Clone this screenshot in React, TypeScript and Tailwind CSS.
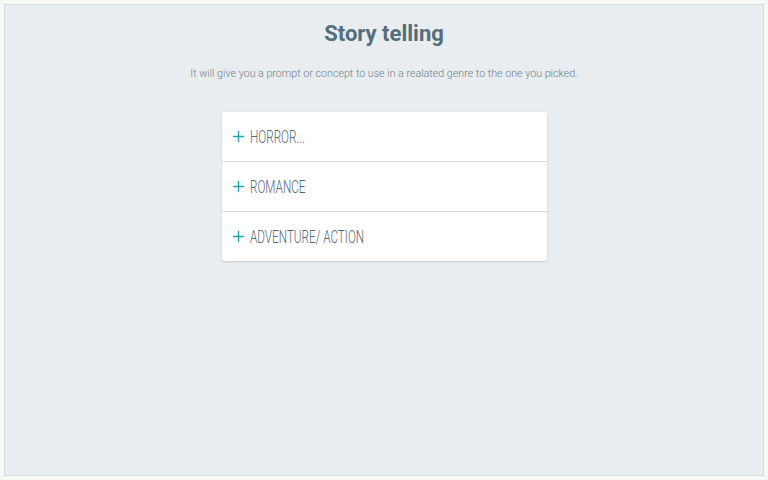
import { Plus } from 'lucide-react';

const genres = ['HORROR...', 'ROMANCE', 'ADVENTURE/ ACTION'];

export default function App() {
    return (
        <div className="h-[480px] w-[768px] bg-[#f7f8f8] p-1 font-['Roboto',sans-serif]">
            <div className="flex h-full flex-col items-center border border-[#d9dcde] bg-[#e9edf0]">
                {/* Header */}
                <h1 className="mt-[15px] text-[22px] font-bold leading-[28px] text-[#546e7a]">Story telling</h1>
                <p className="mt-[19px] text-[10.7px] font-light leading-[14px] text-[#6b7f89]">
                    It will give you a prompt or concept to use in a realated genre to the one you picked.
                </p>

                {/* Accordion */}
                <div className="mt-[31px] w-[325px] rounded-[3px] bg-white shadow-[0_1px_2px_rgba(0,0,0,0.15)]">
                    {genres.map((g, i) => (
                        <div
                            key={g}
                            className={`flex items-center px-[8px] ${i > 0 ? 'h-[50px] border-t border-[#d6dbde]' : 'h-[49px]'}`}
                        >
                            <Plus className="h-[17px] w-[17px] text-[#22a3b4]" strokeWidth={2} />
                            <span className="ml-[3px] inline-block origin-left scale-x-[0.65] text-[18px] font-light leading-[22px] text-[#55666f]">
                                {g}
                            </span>
                        </div>
                    ))}
                </div>
            </div>
        </div>
    );
}
